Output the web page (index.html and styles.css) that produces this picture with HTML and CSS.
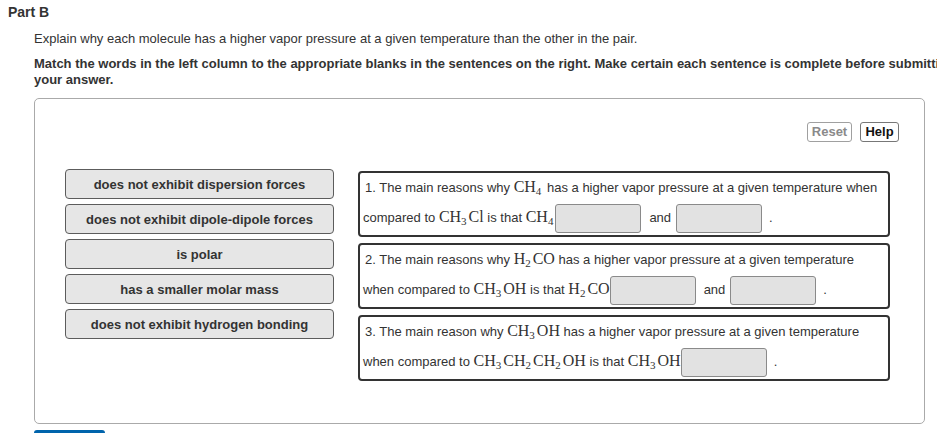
FILE: index.html
```html
<!DOCTYPE html>
<html>
<head>
<meta charset="utf-8">
<link rel="stylesheet" href="styles.css">
</head>
<body>
<div class="page">
  <h2 class="title">Part B</h2>
  <div class="content">
    <p class="intro">Explain why each molecule has a higher vapor pressure at a given temperature than the other in the pair.</p>
    <p class="instr">Match the words in the left column to the appropriate blanks in the sentences on the right. Make certain each sentence is complete before submitting your answer.</p>
    <div class="panel">
      <div class="toolbar">
        <button class="btn btn-reset">Reset</button>
        <button class="btn btn-help">Help</button>
      </div>
      <div class="main">
        <div class="choices">
          <div class="chip">does not exhibit dispersion forces</div>
          <div class="chip">does not exhibit dipole-dipole forces</div>
          <div class="chip">is polar</div>
          <div class="chip">has a smaller molar mass</div>
          <div class="chip">does not exhibit hydrogen bonding</div>
        </div>
        <div class="sentences">
          <div class="sentence">
            <div class="row1">1. The main reasons why <span class="m">CH<span class="sub">4</span></span> has a higher vapor pressure at a given temperature when</div>
            <div class="row2">compared to <span class="m">CH<span class="sub">3</span>Cl</span> is that <span class="m">CH<span class="sub">4</span></span><span class="blank"></span><span class="and">and</span><span class="blank"></span><span class="dot">.</span></div>
          </div>
          <div class="sentence">
            <div class="row1">2. The main reasons why <span class="m">H<span class="sub">2</span>CO</span> has a higher vapor pressure at a given temperature</div>
            <div class="row2">when compared to <span class="m">CH<span class="sub">3</span>OH</span> is that <span class="m">H<span class="sub">2</span>CO</span><span class="blank"></span><span class="and">and</span><span class="blank"></span><span class="dot">.</span></div>
          </div>
          <div class="sentence">
            <div class="row1">3. The main reason why <span class="m">CH<span class="sub">3</span>OH</span> has a higher vapor pressure at a given temperature</div>
            <div class="row2">when compared to <span class="m">CH<span class="sub">3</span>CH<span class="sub">2</span>CH<span class="sub">2</span>OH</span> is that <span class="m">CH<span class="sub">3</span>OH</span><span class="blank"></span><span class="dot">.</span></div>
          </div>
        </div>
      </div>
    </div>
    <button class="submit">Submit</button>
  </div>
</div>
</body>
</html>
```

FILE: styles.css
```css
html, body {
  margin: 0;
  padding: 0;
  overflow: hidden;
  background: #fff;
}
body {
  font-family: "Liberation Sans", Arial, sans-serif;
  color: #333;
  font-size: 13px;
}
.page {
  width: 937px;
  height: 433px;
  overflow: hidden;
}
.title {
  margin: 0;
  padding: 4px 0 0 8px;
  font-size: 14px;
  line-height: 16px;
  font-weight: bold;
  color: #333;
}
.content {
  margin-left: 34px;
}
.intro {
  margin: 11px 0 0 0;
  line-height: 16px;
  white-space: nowrap;
}
.instr {
  margin: 9px 0 0 0;
  width: 940px;
  line-height: 16px;
  font-weight: bold;
}
.panel {
  margin-top: 10px;
  width: 891px;
  box-sizing: border-box;
  border: 1px solid #aaa;
  border-radius: 5px;
  padding: 23px 25px 42px 30px;
}
.toolbar {
  display: flex;
  justify-content: flex-end;
  gap: 8px;
}
.btn {
  height: 20px;
  box-sizing: border-box;
  background: #fff;
  border: 1px solid #8a8a8a;
  border-radius: 3px;
  font-family: "Liberation Sans", Arial, sans-serif;
  font-weight: bold;
  font-size: 13px;
  padding: 0;
  line-height: 18px;
}
.btn-reset {
  width: 45px;
  color: #8a8a8a;
  border-color: #a0a0a0;
}
.btn-help {
  width: 39px;
  color: #111;
  border-color: #777;
}
.main {
  display: flex;
  align-items: flex-start;
  gap: 24px;
  margin-top: 27px;
}
.choices {
  width: 269px;
  display: flex;
  flex-direction: column;
  gap: 5px;
}
.chip {
  height: 30px;
  box-sizing: border-box;
  background: #e6e6e6;
  border: 1px solid #5c5c5c;
  border-radius: 4px;
  display: flex;
  align-items: center;
  justify-content: center;
  font-weight: bold;
  color: #333;
  white-space: nowrap;
}
.sentences {
  width: 532px;
  margin-top: 2px;
  display: flex;
  flex-direction: column;
  gap: 6px;
}
.sentence {
  height: 66px;
  box-sizing: border-box;
  border: 2px solid #333;
  border-radius: 4px;
  padding: 0 4px 3px 3px;
}
.row1 {
  height: 27px;
  line-height: 28px;
  white-space: nowrap;
  padding-left: 2px;
}
.row2 {
  height: 32px;
  line-height: 33px;
  white-space: nowrap;
}
.m {
  font-family: "Liberation Serif", "Times New Roman", serif;
  font-size: 16px;
  color: #333;
}
.sub {
  font-size: 11px;
  vertical-align: -3px;
  margin-right: 2px;
  line-height: 0;
}
.blank {
  display: inline-block;
  width: 86px;
  height: 29px;
  box-sizing: border-box;
  background: #e2e2e2;
  border: 1px solid #8a8a8a;
  border-radius: 3px;
  vertical-align: middle;
}
.and {
  margin: 0 5px 0 8px;
}
.dot {
  margin-left: 7px;
}
.submit {
  margin-top: 6px;
  width: 71px;
  height: 30px;
  background: #0064ac;
  border: none;
  border-radius: 3px 3px 0 0;
  color: #fff;
  font-family: "Liberation Sans", Arial, sans-serif;
  font-size: 13px;
  font-weight: bold;
  padding: 8px 0 0 0;
  line-height: 16px;
  vertical-align: top;
}
```
